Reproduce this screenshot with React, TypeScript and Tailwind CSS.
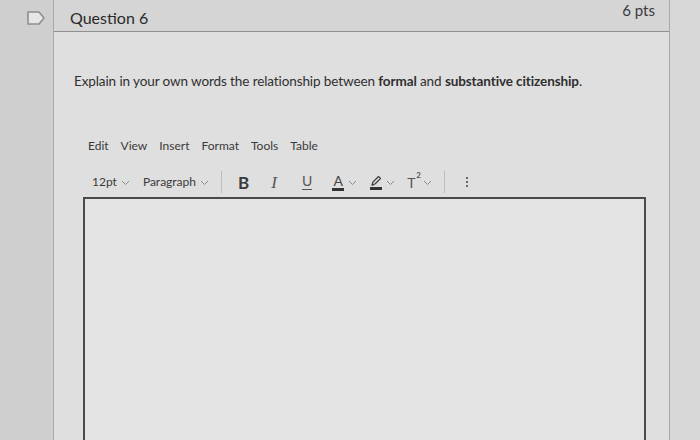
import React from "react";

const Chev = () => (
  <svg width="9" height="6" viewBox="0 0 9 6" className="ml-[4px] mt-[1px]">
    <path d="M1 1 L4.5 4.5 L8 1" fill="none" stroke="#8a8a8a" strokeWidth="1" />
  </svg>
);

export default function App() {
  return (
    <div
      className="w-[700px] h-[440px] overflow-hidden flex bg-[#d6d6d6] text-[#2d2d2d]"
      style={{ fontFamily: "Lato, 'Open Sans', sans-serif" }}
    >
      {/* gutter */}
      <div className="w-[53px] shrink-0 bg-[#cfcfcf] pt-[10px] pl-[26px]">
        <svg width="20" height="16" viewBox="0 0 20 16">
          <path
            d="M2 2 H13 L18 8 L13 14 H2 Z"
            fill="#e6e6e6"
            stroke="#8e8e8e"
            strokeWidth="1.6"
            strokeLinejoin="round"
          />
        </svg>
      </div>
      {/* card */}
      <div className="w-[617px] shrink-0 flex flex-col border-l border-r border-[#a9a9a9] bg-[#dfdfdf]">
        <div className="h-[32px] shrink-0 flex items-start justify-between bg-[#d5d5d5] border-b border-[#8f8f8f] pl-[16px] pr-[14px]">
          <div className="text-[16px] mt-[6px] text-[#2a2a2a]">Question 6</div>
          <div className="text-[15px] mt-[-1px] text-[#3a3a3a]">6 pts</div>
        </div>
        <div className="flex-1 pl-[20px] pr-[16px]">
          <div className="mt-[39px] text-[13.5px] text-[#2f2f2f] tracking-[-0.1px]">
            Explain in your own words the relationship between{" "}
            <span className="font-bold">formal</span> and{" "}
            <span className="font-bold">substantive citizenship</span>.
          </div>
          <div className="mt-[46px] pl-[14px] flex gap-[12px] text-[12px] text-[#3a3a3a]">
            <span>Edit</span>
            <span>View</span>
            <span>Insert</span>
            <span>Format</span>
            <span>Tools</span>
            <span>Table</span>
          </div>
          <div className="mt-[16px] pl-[18px] flex items-center h-[22px] text-[12px] text-[#3a3a3a]">
            <span className="flex items-center">12pt<Chev /></span>
            <span className="flex items-center ml-[13px]">Paragraph<Chev /></span>
            <span className="w-px h-[22px] bg-[#bdbdbd] ml-[12px]" />
            <span className="ml-[16px] text-[17px] font-bold text-[#3a3a3a]">B</span>
            <span
              className="ml-[22px] text-[17px] italic text-[#555]"
              style={{ fontFamily: "'Liberation Serif', serif" }}
            >
              I
            </span>
            <span className="ml-[25px] flex flex-col items-center">
              <span className="text-[14px] leading-[14px] text-[#555]">U</span>
              <span className="w-[10px] h-px bg-[#555] mt-[1px]" />
            </span>
            <span className="ml-[20px] flex items-center">
              <span className="flex flex-col items-center">
                <span className="text-[14px] leading-[13px] text-[#444]">A</span>
                <span className="w-[12px] h-[3px] bg-[#333] mt-[1px]" />
              </span>
              <Chev />
            </span>
            <span className="ml-[13px] flex items-center">
              <span className="flex flex-col items-center">
                <svg width="12" height="12" viewBox="0 0 12 12">
                  <path d="M2 10 L3 7 L8.5 1.5 L10.5 3.5 L5 9 Z" fill="none" stroke="#444" strokeWidth="1.3" strokeLinejoin="round" />
                  <path d="M2 10 L4 9.5" stroke="#444" strokeWidth="1.3" />
                </svg>
                <span className="w-[12px] h-[3px] bg-[#333] mt-[0px]" />
              </span>
              <Chev />
            </span>
            <span className="ml-[12px] flex items-center">
              <span className="text-[14px] text-[#555] relative">
                T<span className="absolute -top-[3px] left-[9px] text-[8px] font-bold">2</span>
              </span>
              <span className="ml-[4px]"><Chev /></span>
            </span>
            <span className="w-px h-[22px] bg-[#bdbdbd] ml-[12px]" />
            <span className="ml-[21px] flex flex-col gap-[2px]">
              <span className="w-[2px] h-[2px] bg-[#444] rounded-full" />
              <span className="w-[2px] h-[2px] bg-[#444] rounded-full" />
              <span className="w-[2px] h-[2px] bg-[#444] rounded-full" />
            </span>
          </div>
          <div className="mt-[4px] ml-[9px] w-[563px] h-[300px] border-2 border-[#4a4a4a] bg-[#e4e4e4]" />
        </div>
      </div>
      <div className="flex-1 bg-[#d8d8d8]" />
    </div>
  );
}
